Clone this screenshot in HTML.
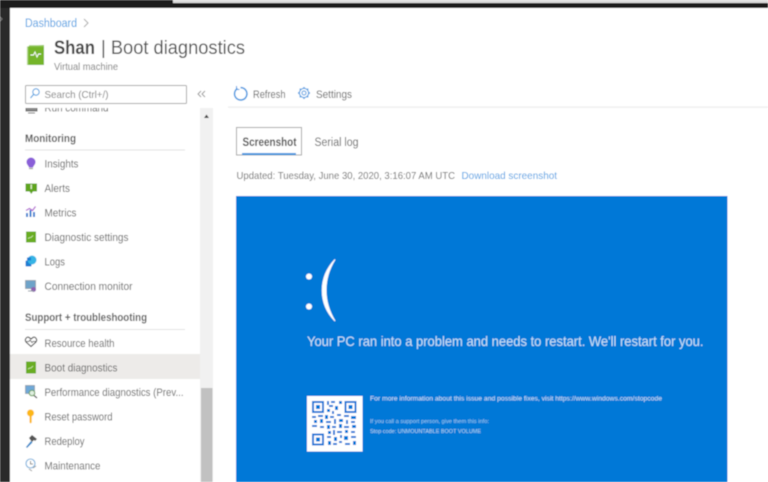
<!DOCTYPE html>
<html><head><meta charset="utf-8"><style>
html,body{margin:0;padding:0;width:768px;height:482px;overflow:hidden;background:#fff}
svg{display:block}
text{font-family:"Liberation Sans",sans-serif;fill:#646464;font-size:11px}
.b{font-weight:bold;fill:#5a5a5a}
.l{fill:#4a9fe3}
</style></head><body>
<svg width="768" height="482" viewBox="0 0 768 482" xmlns="http://www.w3.org/2000/svg">
<defs><filter id="s" x="-2%" y="-2%" width="104%" height="104%"><feGaussianBlur stdDeviation="0.45"/></filter>
<clipPath id="c"><rect x="10" y="108" width="190" height="30"/></clipPath></defs>
<g filter="url(#s)">
<rect width="768" height="482" fill="#fff"/>
<rect width="768" height="8" fill="#1e1e1e"/>
<rect x="173" width="595" height="3" fill="#dcdcdc"/>
<rect y="8" width="10" height="474" fill="#2b2b2b"/>
<path d="M0 17l2 2-2 2" stroke="#777" fill="none"/>

<text x="25" y="27" class="l" style="font-size:11.500px" textLength="52" lengthAdjust="spacingAndGlyphs">Dashboard</text>
<path d="M84 19l4 4-4 4" stroke="#aaa" fill="none"/>

<path d="M27 46.500l17-1.500v20h-17z" fill="#74b52a"/>
<path d="M27.500 46.500v18.500" stroke="#b4d88a" stroke-width="1.200"/>
<path d="M29 46h15" stroke="#94c95a" stroke-width="1.500"/>
<path d="M30.500 55h3l1.500-3 2 5 1.500-3h2.500" stroke="#fff" fill="none" stroke-width=".9"/>

<text x="54" y="54" class="b" style="font-size:19px;fill:#444" textLength="41" lengthAdjust="spacingAndGlyphs">Shan</text>
<text x="101" y="54" style="font-size:19px;fill:#505050" textLength="144" lengthAdjust="spacingAndGlyphs">| Boot diagnostics</text>
<text x="54" y="70" style="font-size:10px;fill:#7a7a7a" textLength="64" lengthAdjust="spacingAndGlyphs">Virtual machine</text>

<rect x="25.500" y="85.500" width="161" height="18" fill="#fff" stroke="#a9a9a9" rx="1"/>
<circle cx="36" cy="92" r="3.200" fill="none" stroke="#4a9ee0"/>
<path d="M33.500 94.500l-3 3.500" stroke="#4a9ee0" stroke-width="1.100"/>
<text x="44.500" y="98" style="font-size:10.500px;fill:#808080" textLength="64" lengthAdjust="spacingAndGlyphs">Search (Ctrl+/)</text>
<path d="M201 91l-3 3 3 3M205 91l-3 3 3 3" stroke="#999" fill="none"/>

<g clip-path="url(#c)">
<text x="44.500" y="111.500" textLength="64" lengthAdjust="spacingAndGlyphs">Run command</text>
<path d="M26 108h11v3h-11zM28 113h7" stroke="#666" fill="#888"/>
</g>
<rect x="200" y="108" width="13" height="374" fill="#f1f1f1"/>
<rect x="201" y="388" width="11.500" height="94" fill="#c1c1c1"/>
<path d="M204 118l2.500-3.500 2.500 3.500z" fill="#444"/>

<text x="25" y="142" class="b" textLength="51" lengthAdjust="spacingAndGlyphs">Monitoring</text>
<rect x="25" y="149.500" width="160" height="1" fill="#e3e3e3"/>

<path d="M31 157.500a4.500 4.500 0 0 1 4.500 4.500c0 2.500-2 3.500-2.500 5.500h-4c-.5-2-2.500-3-2.500-5.500a4.500 4.500 0 0 1 4.500-4.500z" fill="#8a5fd8"/>
<path d="M29 168.500h4" stroke="#999" stroke-width="1.200"/>
<text x="44.500" y="167.500" textLength="34" lengthAdjust="spacingAndGlyphs">Insights</text>

<rect x="25.500" y="183.500" width="11.500" height="8" fill="#5ea51f"/>
<path d="M29.500 191.500h3.500l-1.700 2.500z" fill="#5ea51f"/>
<rect x="30.500" y="184.500" width="1.500" height="4.500" fill="#d8eac0"/>
<text x="44.500" y="192" textLength="25.500" lengthAdjust="spacingAndGlyphs">Alerts</text>

<path d="M26 217h2v-4h-2zM29.500 217h2v-7h-2zM33 217h2v-5h-2z" fill="#2a7fd0"/>
<path d="M26 210.500l3.500-2 3 2 3-4" stroke="#b060d0" stroke-width="1.200" fill="none"/>
<text x="44.500" y="216.500" textLength="32" lengthAdjust="spacingAndGlyphs">Metrics</text>

<rect x="26" y="231.500" width="10" height="11" fill="#69ad23"/>
<path d="M28 238.500l2-1 1 0 2-2" stroke="#d5ecb5" fill="none" stroke-width=".8"/>
<text x="44.500" y="241" textLength="84" lengthAdjust="spacingAndGlyphs">Diagnostic settings</text>

<rect x="25.500" y="260.500" width="6" height="6" fill="#1c7ed2" rx="1"/>
<circle cx="32" cy="260" r="4.500" fill="#36b4e5"/>
<rect x="27" y="257.500" width="4" height="3" fill="#1c7ed2"/>
<text x="44.500" y="265.500" textLength="20.500" lengthAdjust="spacingAndGlyphs">Logs</text>

<rect x="25.500" y="280.500" width="10" height="8" fill="#6ea3c9" stroke="#8c98a3" stroke-width=".8"/>
<circle cx="33.500" cy="289.500" r="2.500" fill="#9060b0"/>
<path d="M28 291h6" stroke="#8c98a3"/>
<text x="44.500" y="290" textLength="88" lengthAdjust="spacingAndGlyphs">Connection monitor</text>

<text x="25" y="321" class="b" textLength="122" lengthAdjust="spacingAndGlyphs">Support + troubleshooting</text>
<rect x="25" y="329" width="160" height="1" fill="#e3e3e3"/>

<path d="M31 346.500l-5-4.500c-2-3 1.500-6 3-4.500l2 1.500 2-1.500c1.500-1.500 5 1.500 3 4.500z" fill="none" stroke="#444" stroke-width="1.100"/>
<path d="M26.500 341.500h2.500l1-1.500 2 2.500 1-1h3" fill="none" stroke="#444" stroke-width=".8"/>
<text x="44.500" y="347" textLength="70" lengthAdjust="spacingAndGlyphs">Resource health</text>

<rect x="10" y="354" width="190" height="25" fill="#edebe9"/>
<rect x="26" y="361.500" width="10" height="12" fill="#69ad23"/>
<path d="M28 369l2-1 1 0 2-2" stroke="#d5ecb5" fill="none" stroke-width=".8"/>
<text x="44.500" y="371.500" textLength="73" lengthAdjust="spacingAndGlyphs">Boot diagnostics</text>

<rect x="25.500" y="385.500" width="9" height="8" fill="#6ea8d8" stroke="#8c98a3" stroke-width=".8"/>
<circle cx="32" cy="393" r="2.800" fill="#dfeee0" stroke="#6a9d5a"/>
<path d="M34 395.500l3 2.500" stroke="#555" stroke-width="1.200"/>
<text x="44.500" y="396" textLength="139" lengthAdjust="spacingAndGlyphs">Performance diagnostics (Prev...</text>

<circle cx="30.500" cy="413" r="3.500" fill="#fcb714"/>
<path d="M29.500 415h2.200v7.500l-1 1-1.200-1z" fill="#fcb714"/>
<text x="44.500" y="420.500" textLength="68" lengthAdjust="spacingAndGlyphs">Reset password</text>

<path d="M26 447l5-6 1.500 1.500-5.500 5.500z" fill="#2f86c8"/>
<path d="M29 438l3-3 5 4-2 2-1-1-2 2z" fill="#555"/>
<text x="44.500" y="445" textLength="40" lengthAdjust="spacingAndGlyphs">Redeploy</text>

<circle cx="30.500" cy="463.500" r="4.500" fill="#fff" stroke="#7ab0dc" stroke-width="1.100"/>
<path d="M30.500 461v3h2.500" stroke="#666" fill="none" stroke-width=".8"/>
<path d="M29 469l3 2M33 468l3-2" stroke="#999"/>
<text x="44.500" y="469.500" textLength="56" lengthAdjust="spacingAndGlyphs">Maintenance</text>

<path d="M237.500 88.500a6.200 6.200 0 1 0 3-.9" fill="none" stroke="#3f97e0" stroke-width="1.500"/>
<path d="M236.500 86v3.500h3" fill="none" stroke="#3f97e0" stroke-width="1"/>
<text x="253" y="98" textLength="32.500" lengthAdjust="spacingAndGlyphs">Refresh</text>
<circle cx="304" cy="93" r="2" fill="none" stroke="#3f97e0"/>
<circle cx="304" cy="93" r="4.600" fill="none" stroke="#3f97e0" stroke-width="1"/>
<path d="M304 87v1.500M304 97.500v1.500M298 93h1.500M308.500 93h1.500M299.800 88.800l1 1M307.200 96.200l1 1M299.800 97.200l1-1M307.200 89.800l1-1" stroke="#3f97e0" stroke-width="1.400"/>
<text x="316" y="98" textLength="36" lengthAdjust="spacingAndGlyphs">Settings</text>
<rect x="228" y="106.500" width="540" height="1.200" fill="#ebebeb"/>

<rect x="236.500" y="127.500" width="65" height="27.500" fill="#fff" stroke="#a6a6a6"/>
<rect x="242" y="153" width="54" height="2" fill="#3f97e0"/>
<text x="242.500" y="146" class="b" style="fill:#4a4a4a;font-size:11.500px" textLength="54" lengthAdjust="spacingAndGlyphs">Screenshot</text>
<text x="314.500" y="146" style="font-size:11.500px" textLength="44" lengthAdjust="spacingAndGlyphs">Serial log</text>
<text x="236.500" y="179" style="font-size:10.500px;fill:#6e6e6e" textLength="218.500" lengthAdjust="spacingAndGlyphs">Updated: Tuesday, June 30, 2020, 3:16:07 AM UTC</text>
<text x="461.500" y="179" class="l" style="font-size:10.500px" textLength="95.500" lengthAdjust="spacingAndGlyphs">Download screenshot</text>

<rect x="236" y="196" width="491.500" height="286" fill="#0078d7"/>
<circle cx="309" cy="276.500" r="3" fill="#fff"/>
<circle cx="309" cy="306.500" r="3" fill="#fff"/>
<path d="M335 259.500c-17 18-17 44 0 61.500c-12-20-12-42 0-61.500z" fill="#fff" stroke="#fff" stroke-width="1"/>
<text x="307" y="346" style="font-size:14px;fill:#c9e2f7" textLength="396.500" lengthAdjust="spacingAndGlyphs">Your PC ran into a problem and needs to restart. We'll restart for you.</text>

<rect x="307" y="396" width="55.500" height="55.500" fill="#fff"/>
<g fill="none" stroke="#0078d7" stroke-width="2"><rect x="313" y="402" width="10" height="10"/><rect x="345.500" y="402" width="10" height="10"/><rect x="313" y="434.500" width="10" height="10"/></g>
<path d="M316 405h4v4h-4zM348.500 405h4v4h-4zM316 437.500h4v4h-4zM327 401h2v4h-2zM331 401h4v2h-4zM339 401h3v3h-3zM329 405h4v2h-4zM335 406h3v4h-3zM327 409h3v3h-3zM332 411h2v3h-2zM312 416h4v2h-4zM318 415h5v2h-5zM325 415h3v4h-3zM330 416h4v2h-4zM337 414h4v2h-4zM344 415h5v2h-5zM351 416h5v3h-5zM314 420h3v3h-3zM320 419h3v4h-3zM326 421h5v2h-5zM334 419h2v5h-2zM339 419h4v3h-4zM346 420h2v4h-2zM351 421h4v2h-4zM312 425h5v2h-5zM320 426h4v2h-4zM327 425h3v4h-3zM332 426h4v2h-4zM339 424h3v4h-3zM344 426h5v2h-5zM352 425h4v3h-4zM328 431h3v3h-3zM333 430h2v5h-2zM337 431h5v2h-5zM345 430h3v3h-3zM351 431h4v2h-4zM327 436h4v2h-4zM334 437h3v4h-3zM340 435h2v3h-2zM344 436h4v4h-4zM351 436h5v2h-5zM328 441h3v4h-3zM339 441h3v2h-3zM345 443h5v2h-5zM353 441h3v4h-3zM333 443h4v2h-4z" fill="#0078d7"/>

<text x="370" y="400.500" style="font-size:6px;fill:#cfe5f8" textLength="292" lengthAdjust="spacingAndGlyphs">For more information about this issue and possible fixes, visit https://www.windows.com/stopcode</text>
<text x="370" y="423" style="font-size:5px;fill:#9ccbf0" textLength="119" lengthAdjust="spacingAndGlyphs">If you call a support person, give them this info:</text>
<text x="370" y="433" style="font-size:5px;fill:#b5d8f3" textLength="111" lengthAdjust="spacingAndGlyphs">Stop code: UNMOUNTABLE BOOT VOLUME</text>
</g>
</svg>
</body></html>
